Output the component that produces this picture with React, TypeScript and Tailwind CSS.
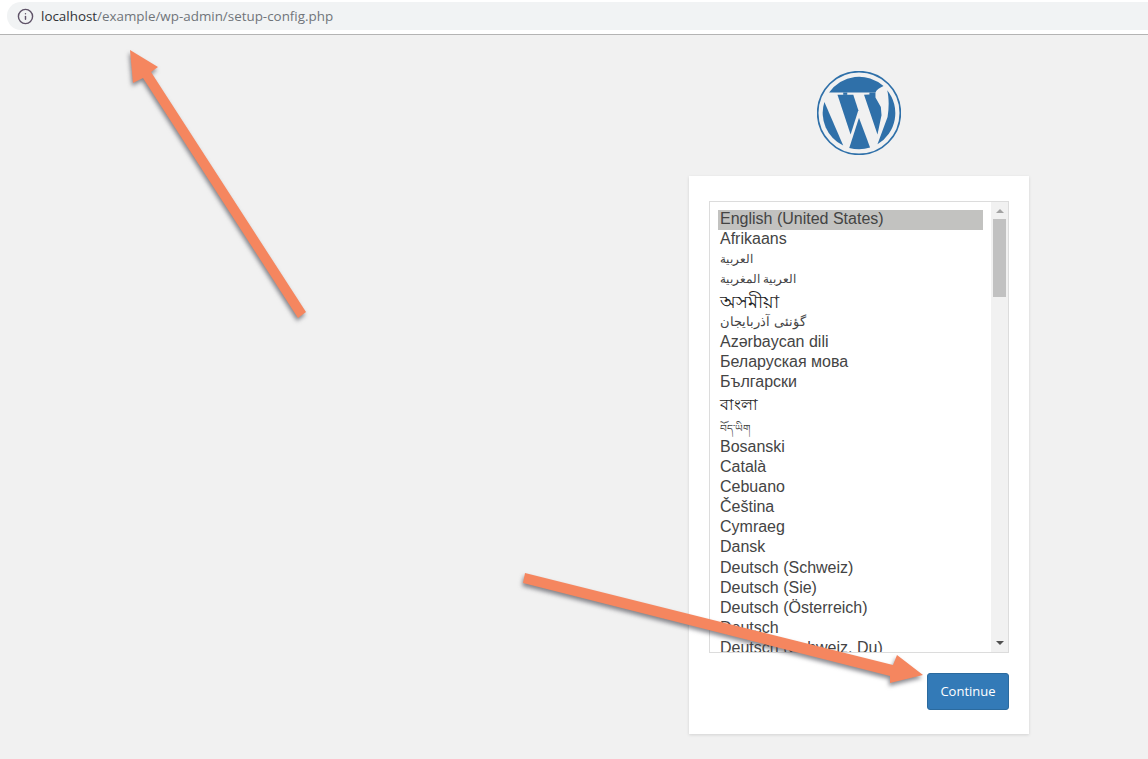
import { Info } from 'lucide-react';

const languages = [
  { label: 'English (United States)', row: 'h-[20px] pb-[2px]', selected: true },
  { label: 'Afrikaans', row: 'h-[20px] pb-[2px]' },
  { label: 'العربية', row: 'h-[20px] pb-[2px] text-[12.4px]' },
  { label: 'العربية المغربية', row: 'h-[20px] pb-[2px] text-[12.4px]' },
  { label: 'অসমীয়া', row: 'h-[23px] pt-[1px] text-[18px] text-[#222]' },
  { label: 'گؤنئی آذربایجان', row: 'h-[20px] pb-[2px] text-[12.7px]' },
  { label: 'Azərbaycan dili', row: 'h-[20px] pb-[2px]' },
  { label: 'Беларуская мова', row: 'h-[20px] pb-[2px]' },
  { label: 'Български', row: 'h-[20px] pb-[2px]' },
  { label: 'বাংলা', row: 'h-[24px] text-[#222]' },
  { label: 'བོད་ཡིག', row: 'h-[21px] text-[10.5px]' },
  { label: 'Bosanski', row: 'h-[20px] pb-[2px]' },
  { label: 'Català', row: 'h-[20px] pb-[2px]' },
  { label: 'Cebuano', row: 'h-[20px] pb-[2px]' },
  { label: 'Čeština', row: 'h-[20px] pb-[2px]' },
  { label: 'Cymraeg', row: 'h-[20px] pb-[2px]' },
  { label: 'Dansk', row: 'h-[20px] pb-[2px]' },
  { label: 'Deutsch (Schweiz)', row: 'h-[21px] pb-[2px]' },
  { label: 'Deutsch (Sie)', row: 'h-[20px] pb-[2px]' },
  { label: 'Deutsch (Österreich)', row: 'h-[20px] pb-[2px]' },
  { label: 'Deutsch', row: 'h-[20px] pb-[2px]' },
  { label: 'Deutsch (Schweiz, Du)', row: 'h-[20px] pb-[2px]' },
];

function WordPressLogo() {
  return (
    <svg className="h-[84px] w-[84px] text-[#2f70a9]" viewBox="82 33 250 250" fill="currentColor">
      <circle cx="207" cy="158" r="123" fill="none" stroke="currentColor" strokeWidth="5" />
      <path d="M118 97A108 108 0 0 1 280 78C268 84 258 90 256 97Z" />
      <path d="M160 97H172V104H160Z" />
      <path d="M104 125A108 108 0 0 0 160 255Z" />
      <path d="M178 262A108 108 0 0 0 240 261L207 172Z" />
      <path d="M143 104H190L205 150 182 222Z" />
      <path d="M222 104 238 103V97H256V112L272 140 274 165 262 222Z" />
      <path d="M291 90A108 108 0 0 1 262 251L292 170C297 140 296 110 291 90Z" />
    </svg>
  );
}

function App() {
  return (
    <div className="relative h-[759px] w-[1148px] overflow-hidden bg-[#f1f1f1] font-['Liberation_Sans',sans-serif]">
      <header className="h-[35px] border-b border-[#b4b4b4] bg-white pt-[2px] pl-[7px]">
        <div className="flex h-[28px] items-center rounded-l-[14px] bg-[#f1f3f4] pl-[10px] font-['Open_Sans',sans-serif] text-[13.4px]">
          <Info className="h-[17px] w-[17px] text-[#5f5368]" strokeWidth={2} />
          <span className="ml-[7px] text-[#303338]">localhost</span>
          <span className="text-[#70757a]">/example/wp-admin/setup-config.php</span>
        </div>
      </header>

      <main className="ml-[689px] flex w-[340px] flex-col items-center pt-[36px]">
        <WordPressLogo />

        <div className="mt-[21px] h-[558px] w-full bg-white pt-[25px] pr-[20px] pl-[20px] shadow-[0_1px_3px_rgba(0,0,0,0.13)]">
          <div className="flex h-[452px] border border-[#dcdcdc]">
            <ul className="min-w-0 flex-1 overflow-hidden pt-[8px] pl-[8px] pr-[8px] text-[16px] leading-[20px] text-[#444]">
              {languages.map((lang) => (
                <li
                  key={lang.label}
                  className={`${lang.row} flex items-center whitespace-nowrap px-[2px] ${lang.selected ? 'bg-[#c2c2c0]' : ''}`}
                >
                  {lang.label}
                </li>
              ))}
            </ul>
            <div className="flex w-[17px] flex-col items-center bg-[#f1f1f1]">
              <svg className="mt-[7px] h-[4px] w-[8px] text-[#a3a3a3]" viewBox="0 0 8 4">
                <path d="M4 0 8 4H0z" fill="currentColor" />
              </svg>
              <div className="mt-[6px] h-[78px] w-[13px] bg-[#c1c1c1]" />
              <svg className="mt-auto mb-[7px] h-[4px] w-[8px] text-[#505050]" viewBox="0 0 8 4">
                <path d="M0 0H8L4 4z" fill="currentColor" />
              </svg>
            </div>
          </div>

          <div className="mt-[20px] flex justify-end">
            <button className="h-[37px] w-[82px] rounded-[3px] border border-[#2b6a9e] bg-[#337ab7] font-['Open_Sans',sans-serif] text-[13px] text-white">
              Continue
            </button>
          </div>
        </div>
      </main>

      {/* annotation arrows drawn over the screenshot */}
      <svg className="pointer-events-none absolute top-0 left-0 h-[759px] w-[1148px] drop-shadow-[-1px_3px_2px_rgba(60,60,70,0.6)]" viewBox="0 0 1148 759">
        <polygon fill="#f5865f" points="130,50 158,67 151,72 306,312 298,318 143,78 133,83" />
        <polygon fill="#f5865f" points="525,573 893,665 897,655 923,675 890,683 890,676 523,583" />
      </svg>
    </div>
  );
}

export default App;
